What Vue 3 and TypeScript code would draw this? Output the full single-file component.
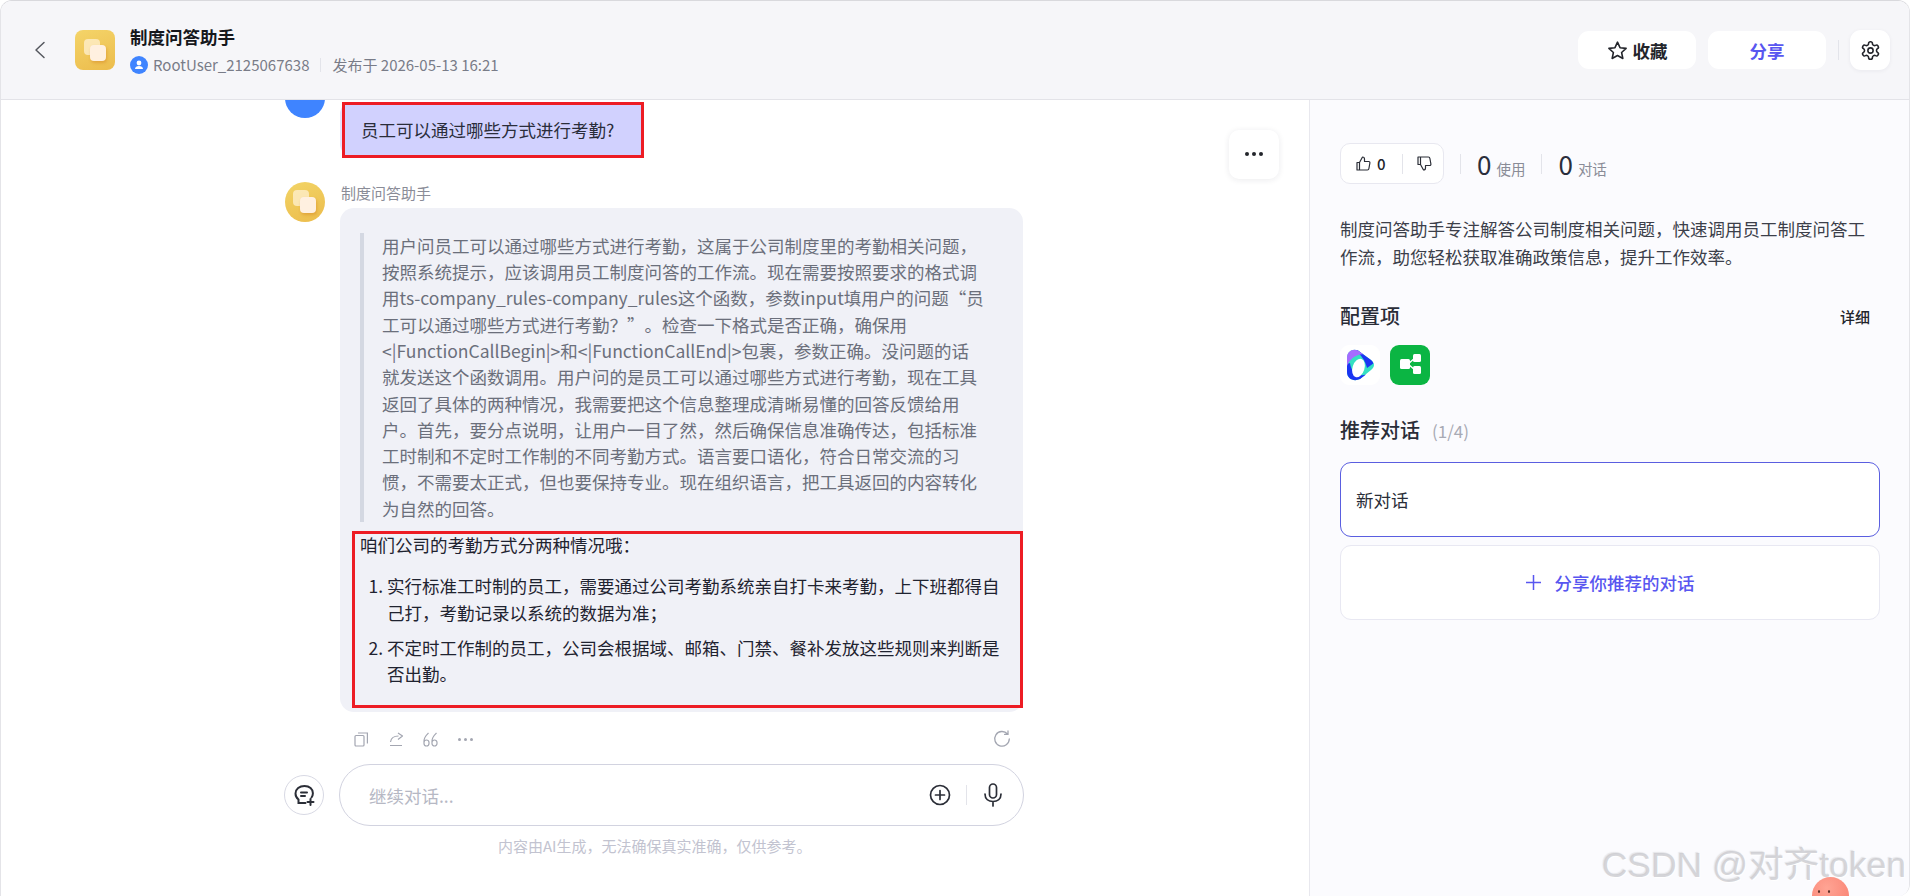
<script setup lang="ts">
const thoughts: string[] = [
  '用户问员工可以通过哪些方式进行考勤，这属于公司制度里的考勤相关问题，',
  '按照系统提示，应该调用员工制度问答的工作流。现在需要按照要求的格式调',
  '用ts-company_rules-company_rules这个函数，参数input填用户的问题“员',
  '工可以通过哪些方式进行考勤？”。检查一下格式是否正确，确保用',
  '<|FunctionCallBegin|>和<|FunctionCallEnd|>包裹，参数正确。没问题的话',
  '就发送这个函数调用。用户问的是员工可以通过哪些方式进行考勤，现在工具',
  '返回了具体的两种情况，我需要把这个信息整理成清晰易懂的回答反馈给用',
  '户。首先，要分点说明，让用户一目了然，然后确保信息准确传达，包括标准',
  '工时制和不定时工作制的不同考勤方式。语言要口语化，符合日常交流的习',
  '惯，不需要太正式，但也要保持专业。现在组织语言，把工具返回的内容转化',
  '为自然的回答。',
]
</script>

<template>
  <div class="app">
    <header class="topbar">
      <button class="back" aria-label="返回">
        <svg width="12" height="18" viewBox="0 0 12 18" fill="none"><path d="M10 1.5 2 9l8 7.5" stroke="#55585f" stroke-width="1.5" stroke-linecap="round" stroke-linejoin="round"/></svg>
      </button>
      <div class="logo">
        <span class="sq sq-a"></span><span class="sq sq-b"></span>
      </div>
      <div class="titles">
        <div class="title">制度问答助手</div>
        <div class="meta">
          <svg width="18" height="18" viewBox="0 0 18 18"><circle cx="9" cy="9" r="9" fill="#3f84ff"/><circle cx="9" cy="7" r="2.4" fill="#fff"/><path d="M5 13c0-2 1.8-3 4-3s4 1 4 3z" fill="#fff"/></svg>
          <span class="owner">RootUser_2125067638</span>
          <i class="vline"></i>
          <span>发布于 2026-05-13 16:21</span>
        </div>
      </div>
      <div class="actions">
        <button class="btn">
          <svg width="21" height="21" viewBox="0 0 20 20" fill="none"><path d="M10 2l2.4 5.300 5.800.7-4.300 3.900 1.200 5.700L10 14.800l-5.100 2.800 1.200-5.700L1.800 8l5.800-.7z" stroke="#23252b" stroke-width="1.500" stroke-linejoin="round"/></svg>
          <span>收藏</span>
        </button>
        <button class="btn share">分享</button>
        <i class="vline tall"></i>
        <button class="gear" aria-label="设置">
          <svg width="21" height="21" viewBox="0 0 24 24" fill="none" stroke="#23252b" stroke-width="1.800" stroke-linejoin="round"><path d="M12.220 2h-.44a2 2 0 0 0-2 2v.18a2 2 0 0 1-1 1.730l-.43.25a2 2 0 0 1-2 0l-.15-.08a2 2 0 0 0-2.730.73l-.22.38a2 2 0 0 0 .73 2.730l.15.1a2 2 0 0 1 1 1.720v.51a2 2 0 0 1-1 1.740l-.15.09a2 2 0 0 0-.73 2.730l.22.38a2 2 0 0 0 2.730.73l.15-.08a2 2 0 0 1 2 0l.43.25a2 2 0 0 1 1 1.730V20a2 2 0 0 0 2 2h.44a2 2 0 0 0 2-2v-.18a2 2 0 0 1 1-1.730l.43-.25a2 2 0 0 1 2 0l.15.08a2 2 0 0 0 2.730-.73l.22-.39a2 2 0 0 0-.73-2.730l-.15-.08a2 2 0 0 1-1-1.740v-.5a2 2 0 0 1 1-1.740l.15-.09a2 2 0 0 0 .73-2.730l-.22-.38a2 2 0 0 0-2.730-.73l-.15.08a2 2 0 0 1-2 0l-.43-.25a2 2 0 0 1-1-1.730V4a2 2 0 0 0-2-2z"/><circle cx="12" cy="12" r="3"/></svg>
        </button>
      </div>
    </header>

    <div class="body">
      <main class="chat">
        <div class="thread">
          <div class="row user-row">
            <div class="avatar user-avatar"><span class="head"></span></div>
            <div class="user-bubble"><div class="mark user-mark">员工可以通过哪些方式进行考勤?</div></div>
            <button class="more" aria-label="更多"><i></i><i></i><i></i></button>
          </div>

          <div class="row ai-row">
            <div class="avatar ai-avatar"><span class="sq sq-c"></span><span class="sq sq-d"></span></div>
            <div class="ai-col">
              <div class="name">制度问答助手</div>
              <div class="ai-bubble">
                <blockquote class="thought">
                  <span v-for="line in thoughts" :key="line" class="line">{{ line }}</span>
                </blockquote>
                <div class="mark answer">
                  <p>咱们公司的考勤方式分两种情况哦：</p>
                  <ol>
                    <li>实行标准工时制的员工，需要通过公司考勤系统亲自打卡来考勤，上下班都得自己打，考勤记录以系统的数据为准；</li>
                    <li>不定时工作制的员工，公司会根据域、邮箱、门禁、餐补发放这些规则来判断是否出勤。</li>
                  </ol>
                </div>
              </div>
              <div class="tools">
                <svg width="15" height="15" viewBox="0 0 15 15" fill="none" stroke="#a3a6b1" stroke-width="1.200"><rect x="1" y="3.500" width="9" height="10.500" rx="1"/><path d="M4 1h9.400v10.500"/></svg>
                <svg width="15" height="15" viewBox="0 0 15 15" fill="none" stroke="#a3a6b1" stroke-width="1.200" stroke-linejoin="round"><path d="M1.500 10c.5-4 3.500-6 8-6M9 1l4.500 3L9 7.500M1 13.500h12"/></svg>
                <svg class="quote" width="15" height="15" viewBox="0 0 15 15" fill="none" stroke="#a3a6b1" stroke-width="1.200"><path d="M5.500 1C3.500 3 1 5 1 9v2.500a2.500 2.500 0 1 0 5 0v-1a2.500 2.500 0 1 0-5 0"/><path d="M13.500 1C11.500 3 9 5 9 9v2.500a2.500 2.500 0 1 0 5 0v-1a2.500 2.500 0 1 0-5 0"/></svg>
                <span class="dots"><i></i><i></i><i></i></span>
                <svg class="retry" width="18" height="18" viewBox="0 0 18 18" fill="none" stroke="#a3a6b1" stroke-width="1.300" stroke-linecap="round"><path d="M14.500 4A7.300 7.300 0 1 0 16.300 9M15 1v3.400h-3.400"/></svg>
              </div>
            </div>
          </div>
        </div>

        <div class="composer">
          <button class="new-chat" aria-label="新对话">
            <svg width="24" height="24" viewBox="0 0 24 24" fill="none" stroke="#2b2e37" stroke-width="2" stroke-linecap="round"><path d="M19.500 14.500c1-1.300 1.400-2.800 1.400-4.200C20.900 6 17.500 3 12.500 3S3.500 6 3.500 10.500c0 2.500 1 4.500 3 6v3.500h7"/><path d="M9 9.500h6M9 13h4M18.500 16v6M15.500 19h6"/></svg>
          </button>
          <div class="input">
            <span class="placeholder">继续对话...</span>
            <svg width="22" height="22" viewBox="0 0 22 22" fill="none" stroke="#2b2e37" stroke-width="1.700" stroke-linecap="round"><circle cx="11" cy="11" r="9.500"/><path d="M11 6.500v9M6.500 11h9"/></svg>
            <i class="vline input-line"></i>
            <svg width="20" height="24" viewBox="0 0 20 24" fill="none" stroke="#2b2e37" stroke-width="1.700" stroke-linecap="round"><rect x="6.500" y="1" width="7" height="14" rx="3.500"/><path d="M2 11c0 5 3.500 7.500 8 7.500s8-2.500 8-7.500M10 18.500V23"/></svg>
          </div>
        </div>
        <div class="notice">内容由AI生成，无法确保真实准确，仅供参考。</div>
      </main>

      <aside class="side">
        <div class="stats">
          <div class="votes">
            <svg width="15" height="15" viewBox="0 0 15 15" fill="none" stroke="#2b2e37" stroke-width="1.200" stroke-linejoin="round"><path d="M1 6.500h2.500V14H1zM3.500 6.500 6.500 1c1.300 0 2 .8 2 2v2.500h4.200c.8 0 1.300.7 1.200 1.500l-1 5.500c-.1.800-.7 1.500-1.500 1.500H3.500"/></svg>
            <span class="vote-n">0</span>
            <i class="vline vote-line"></i>
            <svg width="15" height="15" viewBox="0 0 15 15" fill="none" stroke="#2b2e37" stroke-width="1.200" stroke-linejoin="round"><path d="M1 1h2.500v7.500H1zM3.500 8.500 6.500 14c1.300 0 2-.8 2-2V9.500h4.200c.8 0 1.300-.7 1.200-1.500l-1-5.500C12.800 1.700 12.200 1 11.400 1H3.500"/></svg>
          </div>
          <i class="vline stat-line"></i>
          <div class="stat"><b>0</b><span>使用</span></div>
          <i class="vline stat-line"></i>
          <div class="stat"><b>0</b><span>对话</span></div>
        </div>

        <p class="desc">制度问答助手专注解答公司制度相关问题，快速调用员工制度问答工作流，助您轻松获取准确政策信息，提升工作效率。</p>

        <div class="sec-head"><h3>配置项</h3><span class="detail">详细</span></div>
        <div class="tiles">
          <div class="tile plain">
            <svg width="27" height="32" viewBox="0 0 27 32">
              <path d="M0 9C0 2 6-1 11 1.500L24 11c4 3 4 7 0 10L13 30c-6 3-13 0-13-7z" fill="#35e0c2"/>
              <path d="M11 1.500 24 11c1 1 2 2 2.300 3.500L20 19C18 11 14 6 8 1c1 0 2 0 3 .5z" fill="#1b34f2"/>
              <path d="M0 15v8c0 7 7 10 13 7l6-4.500C12 28 4 24 3 14z" fill="#1b34f2"/>
              <path d="M0 17V9C0 2 6-1 11 1.500l5 3.700C9 5 3 10 0 17z" fill="#a56cff"/>
              <ellipse cx="11.500" cy="19" rx="6" ry="9.500" transform="rotate(18 11.500 19)" fill="#fff"/>
            </svg>
          </div>
          <div class="tile green">
            <svg width="40" height="40" viewBox="0 0 40 40" fill="#fff" stroke-width="1.500">
              <rect x="10" y="14" width="10" height="10" rx="1.500"/>
              <rect x="23" y="9" width="8" height="8" rx="1.500"/>
              <rect x="23" y="21" width="8" height="8" rx="1.500"/>
              <path d="M18 19 25 13M18 19l7 6" stroke="#fff" fill="none"/>
            </svg>
          </div>
        </div>

        <div class="rec-head"><h3>推荐对话</h3><span class="count">(1/4)</span></div>
        <div class="card active">新对话</div>
        <div class="card add">
          <svg width="15" height="15" viewBox="0 0 15 15" stroke="#5856f0" stroke-width="1.500"><path d="M7.500 0v15M0 7.500h15"/></svg>
          <span>分享你推荐的对话</span>
        </div>
      </aside>
    </div>

    <div class="watermark">CSDN @对齐token</div>
    <div class="ball"><i></i><i></i></div>
  </div>
</template>

<style>
html, body { margin: 0; background: #fff; }
</style>

<style scoped>
* { box-sizing: border-box; }
.app {
  position: relative;
  width: 1910px;
  height: 896px;
  display: flex;
  flex-direction: column;
  overflow: hidden;
  font-family: "Noto Sans CJK SC", "Noto Sans", sans-serif;
  color: #1f2330;
  border-top: 1px solid #d9d9dd;
  border-left: 1px solid #e4e4e8;
  border-right: 1px solid #e4e4e8;
  border-radius: 12px 12px 12px 0;
}
button { font: inherit; border: 0; padding: 0; background: none; }
.vline { display: block; width: 1px; background: #e3e4ea; }

.topbar {
  height: 99px;
  flex: none;
  background: #f6f6f9;
  border-bottom: 1px solid #e3e3e8;
  display: flex;
  align-items: center;
  padding: 0 19px 0 33px;
}
.back { display: flex; width: 12px; margin-right: 29px; }
.logo {
  position: relative;
  width: 40px; height: 40px;
  border-radius: 8px;
  background: linear-gradient(160deg, #f4d469, #ecbc4c);
  margin-right: 15px;
}
.sq { position: absolute; display: block; border-radius: 4px; }
.sq-a { left: 9px; top: 9px; width: 16px; height: 16px; background: rgba(255, 240, 210, .75); }
.sq-b { left: 15px; top: 15px; width: 16px; height: 16px; background: #fff0e0; box-shadow: 1px 2px 3px rgba(210, 130, 30, .45); }
.titles { display: flex; flex-direction: column; gap: 6px; }
.title { font-size: 17.5px; font-weight: 600; line-height: 24px; color: #15171c; }
.meta { display: flex; align-items: center; font-size: 15px; line-height: 20px; color: #797c88; }
.owner { margin-left: 5px; font-size: 15px; }
.meta .vline { height: 14px; margin: 0 11px; }
.actions { margin-left: auto; display: flex; align-items: center; }
.btn {
  width: 118px; height: 38px;
  background: #fff;
  border-radius: 11px;
  display: flex; align-items: center; justify-content: center; gap: 5px;
  font-size: 17.5px; font-weight: 600; color: #23252b;
}
.share { margin-left: 12px; color: #5856f0; }
.vline.tall { height: 20px; margin: 0 11px 0 12px; }
.gear {
  width: 40px; height: 40px; border-radius: 11px; background: #fff;
  box-shadow: 0 1px 4px rgba(30, 30, 60, .06);
  display: flex; align-items: center; justify-content: center;
}

.body { flex: 1; min-height: 0; display: flex; }
.chat {
  width: 1308px; flex: none;
  display: flex; flex-direction: column;
  padding-left: 284px;
  background: #fff;
}
.thread { flex: 1; min-height: 0; overflow: hidden; display: flex; flex-direction: column; justify-content: flex-end; }
.row { display: flex; flex: none; }
.avatar { position: relative; width: 40px; height: 40px; border-radius: 50%; flex: none; }
.user-row { align-items: flex-start; }
.user-avatar { background: #3f84ff; margin-top: -24px; }
.head { position: absolute; left: 15px; top: 6px; width: 10px; height: 10px; background: #fff; border-radius: 2px; }
.user-bubble {
  margin: 0 0 0 15px;
  background: #e3e3fb;
  border-radius: 12px;
  height: 54px;
}
.mark { border: 3px solid #ed1c24; }
.user-mark {
  margin-left: 2px;
  width: 302px; height: 56px;
  background: #d1d1fe;
  padding-left: 16px;
  font-size: 17.5px;
  line-height: 49px;
  color: #2a2d3a;
  white-space: nowrap;
}
.more {
  margin: 28px 0 0 585px;
  width: 50px; height: 49px;
  background: #fff;
  border-radius: 10px;
  box-shadow: 0 1px 6px rgba(30, 30, 60, .09);
  display: flex; align-items: center; justify-content: center; gap: 3px;
}
.more i { width: 4px; height: 4px; background: #23252b; border-radius: 50%; }

.ai-row { margin-top: 3px; }
.ai-avatar { background: linear-gradient(160deg, #f2d466, #ecbc4c); }
.sq-c { left: 8px; top: 8px; width: 16px; height: 16px; background: rgba(255, 240, 210, .75); }
.sq-d { left: 15px; top: 15px; width: 16px; height: 16px; background: #fff0e0; box-shadow: 1px 2px 3px rgba(210, 130, 30, .45); }
.ai-col { margin-left: 15px; width: 683px; }
.name { font-size: 15px; line-height: 20px; color: #8a8c97; margin: 1px 0 5px 1px; }
.ai-bubble { background: #f0f1f7; border-radius: 14px; padding: 25px 0 4px; }
.thought {
  margin: 0 0 9px 20px;
  padding-left: 18px;
  border-left: 4px solid #d4d8e2;
  font-size: 17.5px;
  line-height: 26.3px;
  color: #6b6f7b;
  text-spacing-trim: space-all;
}
.line { display: block; white-space: nowrap; }
.answer {
  margin: 0 0 0 12px;
  padding: 0 5px;
  height: 177px;
  font-size: 17.5px;
  line-height: 26.3px;
  color: #1f2330;
}
.answer p { margin: -2px 0 0; }
.answer ol { margin: 15px 0 0; padding: 0 1px 0 27px; }
.answer li { margin-bottom: 9px; }
.tools { display: flex; align-items: center; height: 24px; margin-top: 15px; padding-left: 14px; gap: 20px; }
.quote { margin-left: -1px; }
.dots { display: flex; gap: 3px; }
.dots i { width: 3px; height: 3px; border-radius: 50%; background: #a3a6b1; }
.retry { margin-left: auto; margin-right: 12px; }

.composer { flex: none; display: flex; align-items: center; margin-top: 13px; }
.new-chat {
  width: 40px; height: 40px; border-radius: 50%;
  border: 1px solid #d8d9e4; background: #fff;
  display: flex; align-items: center; justify-content: center;
  margin-left: -1px;
  margin-right: 15px;
}
.input {
  width: 685px; height: 62px;
  border: 1px solid #d2d3e0; border-radius: 31px;
  display: flex; align-items: center;
  padding: 0 20px 0 29px;
}
.placeholder { flex: 1; font-size: 17.5px; color: #b6b8c4; }
.input-line { height: 20px; margin: 0 16px 0 15px; }
.notice {
  flex: none; height: 70px; padding: 9px 0 0 213px;
  font-size: 15px; line-height: 22px; color: #c2c3d0;
}

.side {
  flex: 1;
  background: #fbfbfe;
  border-left: 1px solid #e8e8ee;
  padding: 43px 30px 0 30px;
}
.stats { display: flex; align-items: center; height: 41px; }
.votes {
  width: 104px; height: 41px;
  background: #fff;
  border: 1px solid #e8e8f0; border-radius: 10px;
  display: flex; align-items: center;
  padding-left: 15px;
}
.vote-n { font-size: 15px; font-weight: 500; margin-left: 6px; color: #23252b; }
.vote-line { height: 20px; margin: 0 14px 0 16px; }
.stat-line { height: 20px; margin: 0 16px; }
.stat { display: flex; align-items: baseline; gap: 5px; }
.stat b { font-size: 26px; font-weight: 400; line-height: 32px; color: #2a2e3c; }
.stat span { font-size: 14.500px; color: #8a8c97; }
.desc { margin: 31px 0 0; font-size: 17.5px; line-height: 28px; color: #3c3f4a; }
.sec-head { margin-top: 31px; display: flex; align-items: center; justify-content: space-between; width: 530px; height: 28px; }
h3 { margin: 0; font-size: 20px; font-weight: 500; line-height: 28px; color: #2a2d38; }
.detail { font-size: 15px; font-weight: 500; color: #23252b; }
.tiles { display: flex; gap: 10px; margin-top: 15px; }
.tile { width: 40px; height: 40px; border-radius: 9px; display: flex; align-items: center; justify-content: center; }
.plain { background: #fff; }
.green { background: #0bb543; }
.rec-head { margin-top: 31px; display: flex; align-items: baseline; gap: 12px; }
.count { font-size: 17px; color: #a8aab4; }
.card {
  width: 540px; height: 75px; border-radius: 11px; background: #fff;
  display: flex; align-items: center;
  font-size: 17.5px;
}
.active { margin-top: 18px; border: 1px solid #5a5ee0; padding-left: 15px; color: #2a2d38; }
.add {
  margin-top: 8px; border: 1px solid #e8e8f2; justify-content: center; gap: 14px;
  color: #5856f0; font-weight: 500;
}

.watermark {
  position: absolute; right: 3px; bottom: 9px;
  font: 35.5px "Liberation Sans", "Noto Sans CJK SC", sans-serif;
  color: rgba(200, 200, 205, .75);
  text-shadow: 1px 1px 1px rgba(255, 255, 255, .9), -1px -1px 1px rgba(120, 120, 120, .16);
  white-space: nowrap;
}
.ball {
  position: absolute; left: 1811px; top: 876px;
  width: 37px; height: 37px; border-radius: 50%;
  background: radial-gradient(circle at 40% 30%, #ffa494, #f87b6b);
}
.ball i { position: absolute; top: 13px; width: 2px; height: 3px; background: #5a3028; border-radius: 50%; }
.ball i:first-child { left: 6px; }
.ball i:last-child { left: 16px; }
</style>
